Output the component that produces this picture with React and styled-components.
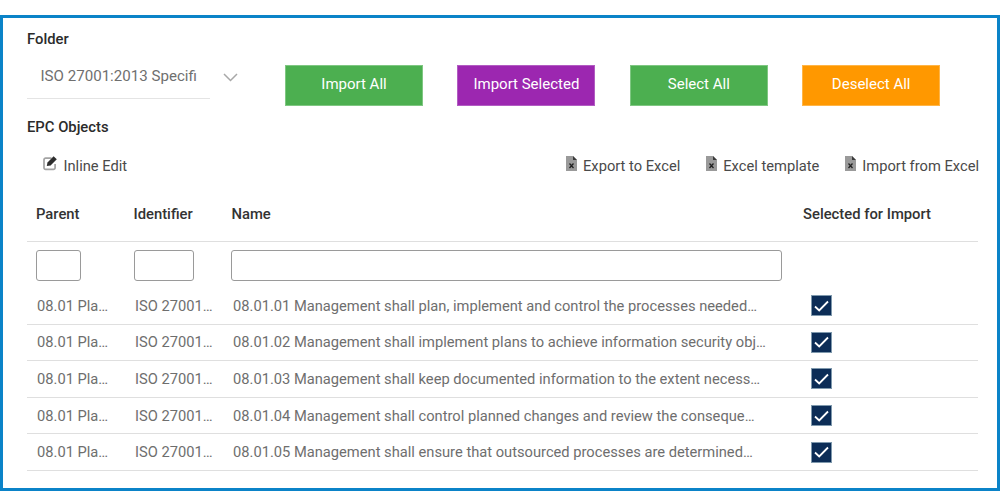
import React from "react";
import styled, { createGlobalStyle } from "styled-components";

const Global = createGlobalStyle`
  html, body { margin: 0; padding: 0; background: #fff; }
  body { font-family: Roboto, "Liberation Sans", sans-serif; overflow: hidden; }
  * { box-sizing: border-box; }
`;

const Frame = styled.div`
  margin-top: 15px;
  height: 476px;
  border: 3px solid #0b83c8;
  padding: 13px 18px 0 24px;
`;
const Label = styled.div`
  font-size: 14.8px;
  line-height: 16px;
  font-weight: 500;
  color: #2b2b2b;
`;
const TopRow = styled.div`
  display: flex;
  align-items: flex-start;
  height: 69px;
  margin-top: 3px;
`;
const Select = styled.div`
  width: 183px;
  height: 44px;
  margin-top: 5px;
  padding: 0 0 0 13.5px;
  border-bottom: 1px solid #e4e4e4;
  position: relative;
  font-size: 15.1px;
  line-height: 42px;
  color: #6f6f6f;
  white-space: nowrap;
`;
const Chevron = styled.svg`
  position: absolute;
  left: 196px;
  top: 18px;
`;
const Buttons = styled.div`
  display: flex;
  gap: 34.4px;
  margin-left: 75px;
  margin-top: 15px;
`;
const Button = styled.button`
  width: 138px;
  height: 41px;
  border: 1px solid ${(p) => p.$edge};
  background: ${(p) => p.$color};
  color: #fff;
  font-family: inherit;
  font-size: 15px;
  padding: 0 0 3px;
`;
const Toolbar = styled.div`
  display: flex;
  align-items: center;
  justify-content: space-between;
  height: 30px;
  margin-top: 16px;
  padding-left: 16px;
`;
const ToolGroup = styled.div`
  display: flex;
  gap: 26px;
`;
const Tool = styled.div`
  display: flex;
  align-items: center;
  gap: ${(p) => p.$gap || 6}px;
  font-size: 14.7px;
  color: #4a4a4a;
  white-space: nowrap;
`;
const Icon = styled.svg`
  margin-top: -6px;
`;
const Row = styled.div`
  display: grid;
  grid-template-columns: 98px 98px 570px 185px;
  width: 951px;
  height: ${(p) => p.$h}px;
  padding-top: ${(p) => p.$top || 0}px;
  align-items: center;
  border-bottom: ${(p) => (p.$noline ? "none" : "1px solid #dfdfdf")};
`;
const Head = styled.div`
  font-size: 14.8px;
  font-weight: 500;
  color: #333;
  padding-left: ${(p) => p.$pad ?? 9}px;
`;
const Filter = styled.input`
  display: block;
  width: ${(p) => p.$w}px;
  height: 31px;
  margin-left: ${(p) => p.$left ?? 9}px;
  border: 1px solid #9a9a9a;
  border-radius: 3px;
  background: #fff;
  padding: 0;
`;
const Cell = styled.div`
  font-size: 14.7px;
  color: #6e6e6e;
  padding-left: ${(p) => p.$pad ?? 10}px;
  white-space: nowrap;
`;
const Check = styled.div`
  width: 21px;
  height: 21px;
  margin-left: 18px;
  background: #0c2d57;
  border: 1px solid #7f99ad;
  display: flex;
  align-items: center;
  justify-content: center;
`;

const EditIcon = () => (
  <Icon width="15" height="16" viewBox="0 0 15 16">
    <path d="M8.5 3.2H2.6A1.6 1.6 0 0 0 1 4.8v7.9a1.6 1.6 0 0 0 1.6 1.6h7.9a1.6 1.6 0 0 0 1.6-1.6V9" fill="none" stroke="#a3a3a3" strokeWidth="1.7" />
    <path d="M3.8 11l.7-3.6L10.6 1.2l3.2 3-6.2 6.2z" fill="#2e2e2e" />
  </Icon>
);

const ExcelIcon = () => (
  <Icon width="11" height="15" viewBox="0 0 11 15">
    <path d="M0 0h7L11 4v11H0z" fill="#9a9a9a" />
    <path d="M7 0l4 4H7z" fill="#3a3a3a" />
    <path d="M3.5 7.5l4 4.5M7.5 7.5l-4 4.5" stroke="#222" strokeWidth="1.3" />
  </Icon>
);

const rows = [
  "08.01.01 Management shall plan, implement and control the processes needed…",
  "08.01.02 Management shall implement plans to achieve information security obj…",
  "08.01.03 Management shall keep documented information to the extent necess…",
  "08.01.04 Management shall control planned changes and review the conseque…",
  "08.01.05 Management shall ensure that outsourced processes are determined…",
];

export default function App() {
  return (
    <>
      <Global />
      <Frame>
        <Label>Folder</Label>
        <TopRow>
          <Select>
            ISO 27001:2013 Specifi
            <Chevron width="15" height="9" viewBox="0 0 15 9">
              <path d="M1 1l6.5 6.5L14 1" fill="none" stroke="#a8a8a8" strokeWidth="1.5" />
            </Chevron>
          </Select>
          <Buttons>
            <Button $color="#4caf50" $edge="#7fc782">Import All</Button>
            <Button $color="#9c27b0" $edge="#b25cc2">Import Selected</Button>
            <Button $color="#4caf50" $edge="#7fc782">Select All</Button>
            <Button $color="#ff9800" $edge="#ffb547">Deselect All</Button>
          </Buttons>
        </TopRow>
        <Label>EPC Objects</Label>
        <Toolbar>
          <Tool $gap={5.5}>
            <EditIcon />
            Inline Edit
          </Tool>
          <ToolGroup>
            <Tool><ExcelIcon />Export to Excel</Tool>
            <Tool><ExcelIcon />Excel template</Tool>
            <Tool><ExcelIcon />Import from Excel</Tool>
          </ToolGroup>
        </Toolbar>
        <Row $h={61} $top={6}>
          <Head>Parent</Head>
          <Head $pad={8.5}>Identifier</Head>
          <Head $pad={8.5}>Name</Head>
          <Head $pad={10}>Selected for Import</Head>
        </Row>
        <Row $h={46} $top={1} $noline>
          <div><Filter $w={45} /></div>
          <div><Filter $w={60} /></div>
          <div><Filter $w={551} $left={8} /></div>
          <div />
        </Row>
        {rows.map((name) => (
          <Row $h={36.6} key={name}>
            <Cell>08.01 Pla…</Cell>
            <Cell>ISO 27001…</Cell>
            <Cell>{name}</Cell>
            <Check>
              <svg width="15" height="12" viewBox="0 0 15 12">
                <path d="M1 6.5l4.2 4L14 1.5" fill="none" stroke="#fff" strokeWidth="1.8" />
              </svg>
            </Check>
          </Row>
        ))}
      </Frame>
    </>
  );
}
